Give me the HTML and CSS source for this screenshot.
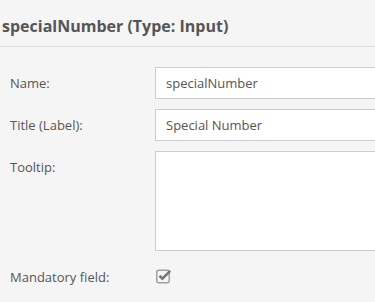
FILE: index.html
```html
<!DOCTYPE html>
<html>
<head>
<meta charset="utf-8">
<link rel="stylesheet" href="styles.css">
</head>
<body>
<div class="page">
  <h2 class="title">specialNumber (Type: Input)</h2>
  <div class="form">
    <div class="row">
      <label class="label">Name:</label>
      <div class="field"><input class="input" type="text" value="specialNumber"></div>
    </div>
    <div class="row">
      <label class="label">Title (Label):</label>
      <div class="field"><input class="input" type="text" value="Special Number"></div>
    </div>
    <div class="row">
      <label class="label">Tooltip:</label>
      <div class="field"><textarea class="textarea"></textarea></div>
    </div>
    <div class="row">
      <label class="label">Mandatory field:</label>
      <div class="field check-field">
        <svg class="check" width="16" height="15" viewBox="0 0 16 15">
          <rect x="0.75" y="1.25" width="12.5" height="12.5" rx="2" ry="2" fill="none" stroke="#a0a0a0" stroke-width="1.5"/>
          <path d="M3.5 6.8 L6.4 9.6 L14.2 1.9" fill="none" stroke="#777" stroke-width="2.6" stroke-linejoin="miter"/>
        </svg>
      </div>
    </div>
  </div>
</div>
</body>
</html>
```

FILE: styles.css
```css
html, body {
  margin: 0;
  padding: 0;
  background: #f5f5f5;
  overflow: hidden;
}
.page {
  width: 375px;
  height: 302px;
  overflow: hidden;
  font-family: "Open Sans", "Liberation Sans", sans-serif;
  color: #555;
}
.title {
  margin: 15px 0 0 0;
  padding: 0 0 9px 2px;
  font-size: 16px;
  line-height: 22px;
  font-weight: 700;
  color: #555;
  border-bottom: 1px solid #dcdcdc;
}
.form {
  display: flex;
  flex-direction: column;
  gap: 10px;
  padding-top: 20px;
}
.row {
  display: flex;
  align-items: flex-start;
}
.label {
  width: 145px;
  flex: none;
  padding: 7px 0 0 10px;
  font-size: 13px;
  line-height: 18px;
  color: #555;
}
.field {
  flex: 1;
  min-width: 0;
  overflow: hidden;
}
.input, .textarea {
  display: block;
  box-sizing: border-box;
  width: 260px;
  margin: 0;
  border: 1px solid #cccccc;
  background: #fff;
  font-family: "Open Sans", "Liberation Sans", sans-serif;
  font-size: 13px;
  color: #555;
  outline: none;
}
.input {
  height: 32px;
  padding: 0 10px;
  line-height: 30px;
}
.textarea {
  height: 100px;
  padding: 6px 10px;
  resize: none;
}
.check-field {
  padding-top: 8px;
  padding-left: 1px;
}
.check {
  display: block;
}
```
